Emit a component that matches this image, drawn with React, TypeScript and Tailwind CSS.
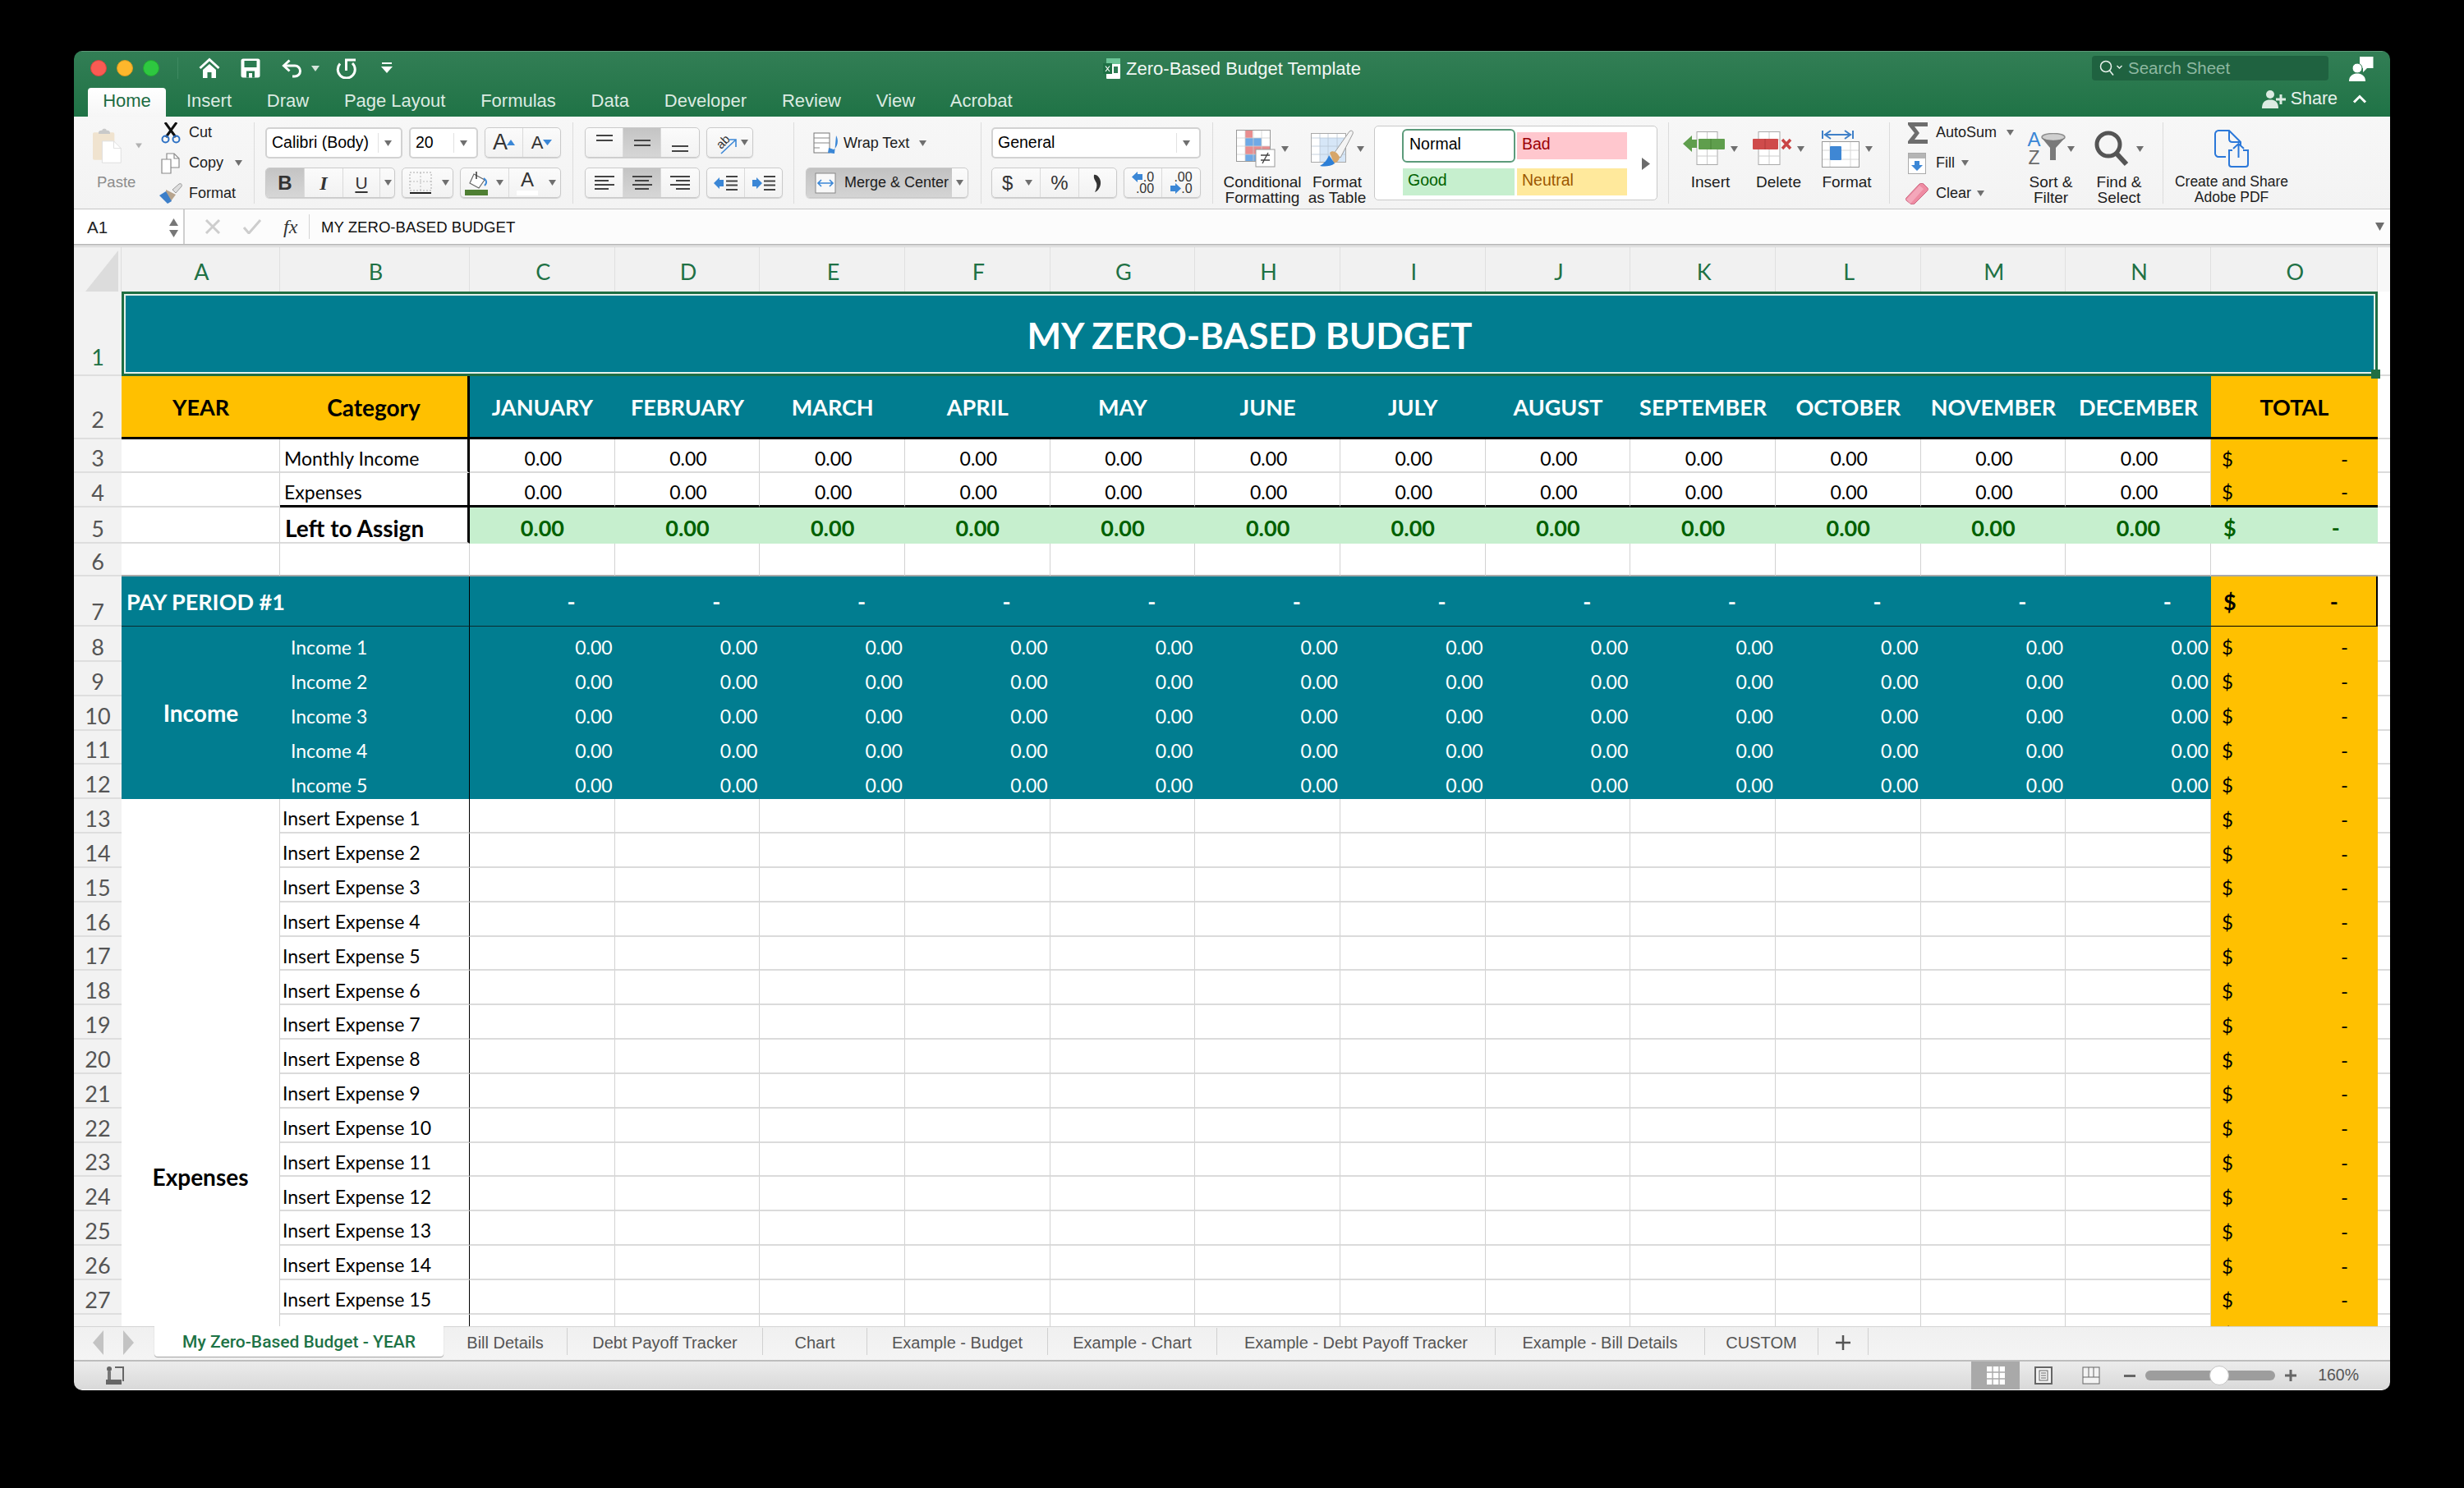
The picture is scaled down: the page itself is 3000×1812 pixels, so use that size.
import React from "react";

const teal = "bg-[#017d90]";
const months = ["JANUARY", "FEBRUARY", "MARCH", "APRIL", "MAY", "JUNE", "JULY", "AUGUST", "SEPTEMBER", "OCTOBER", "NOVEMBER", "DECEMBER"];
const columns = ["A", "B", "C", "D", "E", "F", "G", "H", "I", "J", "K", "L", "M", "N", "O"];
const ribbonTabs = ["Insert", "Draw", "Page Layout", "Formulas", "Data", "Developer", "Review", "View", "Acrobat"];
const sheetTabs = [
  { name: "Bill Details", w: "w-[151px]" },
  { name: "Debt Payoff Tracker", w: "w-[238px]" },
  { name: "Chart", w: "w-[127px]" },
  { name: "Example - Budget", w: "w-[220px]" },
  { name: "Example - Chart", w: "w-[206px]" },
  { name: "Example - Debt Payoff Tracker", w: "w-[339px]" },
  { name: "Example - Bill Details", w: "w-[255px]" },
  { name: "CUSTOM", w: "w-[138px]" },
];
const twelve = Array.from({ length: 12 }, (_, i) => i);

function Caret({ className = "" }: { className?: string }) {
  return (
    <svg width="9" height="7" viewBox="0 0 9 7" className={className}>
      <path d="M0 0H9L4.5 7Z" fill="#6f6f6f" />
    </svg>
  );
}

function Sep() {
  return <div className="w-px h-[99px] mt-[7px] bg-[#dcdcdc] shrink-0" />;
}

// grouped buttons of the ribbon
function Group({ className = "", children }: { className?: string; children: React.ReactNode }) {
  return (
    <div className={`flex h-[37px] rounded-[5px] border border-[#cacaca] bg-gradient-to-b from-[#fbfbfb] to-[#f2f2f2] shadow-[0_1px_1px_rgba(0,0,0,0.15)] overflow-hidden ${className}`}>
      {children}
    </div>
  );
}

function Seg({ w, on, line, children }: { w: string; on?: boolean; line?: boolean; children?: React.ReactNode }) {
  return (
    <div className={`flex items-center justify-center h-full ${w} ${on ? "bg-gradient-to-b from-[#c4c4c4] to-[#d6d6d6]" : ""} ${line ? "border-r border-[#dadada]" : ""}`}>
      {children}
    </div>
  );
}

function InputBox({ w, text, inner }: { w: string; text: string; inner: string }) {
  return (
    <div className={`flex items-center h-[38px] rounded-[5px] border-2 border-[#d2d2d2] bg-white ${w}`}>
      <span className={`pl-[6px] text-[19.5px] text-black ${inner}`}>{text}</span>
      <div className="w-px h-[24px] bg-[#e2e2e2]" />
      <Caret className="ml-[7px]" />
    </div>
  );
}

function Lines({ rows }: { rows: [number, number, number][] }) {
  return (
    <svg width="26" height="22" viewBox="0 0 26 22">
      {rows.map(([x, y, w], i) => (
        <rect key={i} x={x} y={y} width={w} height="2" fill="#444" />
      ))}
    </svg>
  );
}

function BigButton({ w, icon, gap = "gap-[6px]", labels, noCaret, size = "text-[19px]" }: { w: string; icon: React.ReactNode; gap?: string; labels: string[]; noCaret?: boolean; size?: string }) {
  return (
    <div className={`flex flex-col items-center pt-[14px] ${w}`}>
      <div className={`flex items-center justify-center h-[56px] pb-[6px] ${gap}`}>
        {icon}
        {!noCaret && <Caret />}
      </div>
      {labels.map((l) => (
        <div key={l} className={`${size} leading-[19px] text-[#1c1c1c] whitespace-nowrap`}>{l}</div>
      ))}
    </div>
  );
}

function SmallRow({ icon, label, caret, gap = "ml-[8px]" }: { icon: React.ReactNode; label: string; caret?: boolean; gap?: string }) {
  return (
    <div className="flex items-center h-[37px]">
      <div className="flex items-center w-[34px]">{icon}</div>
      <span className="text-[18px] text-[#1c1c1c]">{label}</span>
      {caret && <Caret className={gap} />}
    </div>
  );
}

function TitleBar() {
  return (
    <div className="grid grid-cols-[1fr_auto_1fr] h-[44px] pb-[4px] items-center">
      <div className="flex items-center pl-[20px]">
        <div className="w-[20px] h-[20px] rounded-full bg-[#fa5b53] border border-[#d8453e]" />
        <div className="w-[20px] h-[20px] rounded-full bg-[#fdb72c] border border-[#dc9a1e] ml-[12px]" />
        <div className="w-[20px] h-[20px] rounded-full bg-[#2ec840] border border-[#22a82f] ml-[12px]" />
        <div className="w-px h-[26px] bg-[#3f8a62] ml-[22px]" />
        <svg width="26" height="26" viewBox="0 0 26 26" className="ml-[25px]">
          <path d="M1.5 13 L13 2.5 L24.5 13" fill="none" stroke="#fff" strokeWidth="3" />
          <path d="M5 15 L13 8 L21 15 V25 H15.5 V18 H10.5 V25 H5Z" fill="#fff" />
        </svg>
        <svg width="24" height="24" viewBox="0 0 24 24" className="ml-[25px]">
          <rect x="0.5" y="0.5" width="23" height="23" rx="2.5" fill="#fff" />
          <rect x="4.5" y="3" width="15" height="8" fill="#2a7a50" />
          <rect x="7" y="15.5" width="10" height="8" fill="#2a7a50" />
          <rect x="10" y="18" width="4" height="5.5" fill="#fff" />
        </svg>
        <svg width="26" height="23" viewBox="0 0 26 23" className="ml-[26px]">
          <path d="M9.5 1.5 L2.5 8 L9.5 14.5" fill="none" stroke="#fff" strokeWidth="3" />
          <path d="M3 8 H16 A6.5 6.5 0 0 1 16 21 H13" fill="none" stroke="#fff" strokeWidth="3" />
        </svg>
        <svg width="10" height="7" viewBox="0 0 10 7" className="ml-[10px]">
          <path d="M0 0H10L5 7Z" fill="#d5e4db" />
        </svg>
        <svg width="25" height="25" viewBox="0 0 25 25" className="ml-[20px]">
          <path d="M5 6.5 A10.5 10.5 0 1 0 20 6" fill="none" stroke="#fff" strokeWidth="3" />
          <path d="M12.5 15 V2 H24" fill="none" stroke="#fff" strokeWidth="3" />
        </svg>
        <svg width="14" height="14" viewBox="0 0 14 14" className="ml-[30px]">
          <rect x="1" y="0" width="12" height="2" fill="#fff" />
          <path d="M0 5H14L7 13Z" fill="#fff" />
        </svg>
      </div>
      <div className="flex items-center">
        <svg width="21" height="25" viewBox="0 0 21 25">
          <rect x="4" y="0" width="17" height="25" rx="1" fill="#fff" />
          <rect x="4" y="0" width="17" height="7" fill="#6cc497" />
          <rect x="0" y="6" width="11" height="13" fill="#1e7145" />
          <rect x="13" y="10" width="5" height="8" fill="#2d7d54" />
          <path d="M3 9.5 L8 16 M8 9.5 L3 16" stroke="#fff" strokeWidth="1.2" />
        </svg>
        <span className="ml-[7px] text-[22px] text-[#f1f7f3]">Zero-Based Budget Template</span>
      </div>
      <div className="flex items-center justify-end pr-[20px]">
        <div className="flex items-center w-[288px] h-[30px] rounded-[4px] bg-[#1f6240] pl-[9px]">
          <svg width="30" height="20" viewBox="0 0 30 20">
            <circle cx="8" cy="8" r="6.5" fill="none" stroke="#e8f1ec" strokeWidth="1.5" />
            <path d="M12.5 13 L17 18.5" stroke="#e8f1ec" strokeWidth="1.6" />
            <path d="M21.5 7 L24.5 10 L27.5 7" fill="none" stroke="#e8f1ec" strokeWidth="1.4" />
          </svg>
          <span className="ml-[5px] text-[20.5px] text-[#8eb8a1]">Search Sheet</span>
        </div>
        <svg width="30" height="31" viewBox="0 0 30 31" className="ml-[25px]">
          <path d="M13 1 H29.5 V15 H22 L17 20 V15 H13Z" fill="#fff" />
          <circle cx="10" cy="15" r="6" fill="#fff" stroke="#2a7a50" strokeWidth="1" />
          <path d="M0 31 C0 24 5 21.5 10 21.5 C15 21.5 20 24 20 31Z" fill="#fff" />
        </svg>
      </div>
    </div>
  );
}

function TabStrip() {
  return (
    <div className="flex h-[35px] pl-[17px] items-stretch">
      <div className="flex items-center justify-center w-[95px] pb-[4px] bg-gradient-to-b from-[#ffffff] to-[#f6f6f6] rounded-t-[4px] text-[22px] text-[#1d6c43]">Home</div>
      <div className="flex items-center gap-[42.75px] pl-[25px] pb-[4px] text-[22px] text-[#dcebe2]">
        {ribbonTabs.map((t) => (
          <span key={t}>{t}</span>
        ))}
      </div>
      <div className="flex items-center ml-auto pr-[28px] pb-[9px]">
        <svg width="29" height="23" viewBox="0 0 29 23">
          <circle cx="10" cy="6" r="5" fill="#dcebe2" />
          <path d="M0 23 C0 15 4 12.5 10 12.5 C16 12.5 20 15 20 23Z" fill="#dcebe2" />
          <path d="M17 12 H29 M23 6 V18" stroke="#dcebe2" strokeWidth="3" />
        </svg>
        <span className="ml-[6px] text-[21.5px] text-[#e8f2ec]">Share</span>
        <svg width="18" height="11" viewBox="0 0 18 11" className="ml-[18px]">
          <path d="M2 9.5 L9 2.5 L16 9.5" fill="none" stroke="#fff" strokeWidth="3" />
        </svg>
      </div>
    </div>
  );
}

function Clipboard() {
  return (
    <div className="flex w-[219px] pl-[23px] shrink-0">
      <div className="flex flex-col w-[60px] pt-[12px]">
        <div className="flex items-center h-[47px]">
          <svg width="40" height="48" viewBox="0 0 40 48">
            <rect x="0" y="5" width="30" height="38" rx="2" fill="#f0e3cf" />
            <path d="M8 5 C8 2 12 2 13 2 C13 -1 19 -1 19 2 C21 2 24 2 24 7 H8Z" fill="#c9c9c9" />
            <path d="M13 17 H29 L39 27 V47 H13Z" fill="#fff" stroke="#dcdcdc" />
            <path d="M29 17 V27 H39" fill="none" stroke="#dcdcdc" />
          </svg>
          <Caret className="ml-[17px] opacity-50" />
        </div>
        <div className="pt-[7px] pl-[5px] text-[18.5px] text-[#8c8c8c]">Paste</div>
      </div>
      <div className="flex flex-col pl-[23px] pt-px">
        <SmallRow
          label="Cut"
          icon={
            <svg width="24" height="26" viewBox="0 0 24 26">
              <path d="M5 0 L18 18 M19 0 L6 18" stroke="#111" strokeWidth="3" />
              <circle cx="5.5" cy="20.5" r="4" fill="none" stroke="#2f72c4" strokeWidth="2" />
              <circle cx="18.5" cy="20.5" r="4" fill="none" stroke="#2f72c4" strokeWidth="2" />
            </svg>
          }
        />
        <SmallRow
          label="Copy"
          caret
          gap="ml-[14px]"
          icon={
            <svg width="23" height="26" viewBox="0 0 23 26">
              <path d="M7 1 H16 L22 7 V18 H7Z" fill="#fff" stroke="#8a8a8a" strokeWidth="1.2" />
              <path d="M16 1 V7 H22" fill="none" stroke="#8a8a8a" strokeWidth="1.2" />
              <path d="M1 8 H12 V25 H1Z" fill="#fff" stroke="#8a8a8a" strokeWidth="1.2" />
            </svg>
          }
        />
        <SmallRow
          label="Format"
          icon={
            <svg width="28" height="25" viewBox="0 0 28 25" className="-ml-[2px]">
              <path d="M16 8 L24 1 C27 0 28 2 27 4 L20 12Z" fill="#dedede" stroke="#9a9a9a" />
              <path d="M8 8 L20 14 L14 22 L8 16Z" fill="#b7a48d" />
              <path d="M0 15 L8 10 L15 22 L10 25Z" fill="#3d7fc9" />
            </svg>
          }
        />
      </div>
    </div>
  );
}

function FontGroup() {
  return (
    <div className="flex flex-col gap-[11px] w-[387px] pl-[13px] pt-[13px] shrink-0">
      <div className="flex gap-[8px]">
        <InputBox w="w-[167px]" text="Calibri (Body)" inner="w-[135px]" />
        <InputBox w="w-[84px]" text="20" inner="w-[52px]" />
        <Group className="w-[93px]">
          <Seg w="w-[47px]" line>
            <span className="text-[27px] text-[#333] -mr-[1px]">A</span>
            <svg width="10" height="7" viewBox="0 0 10 7"><path d="M5 0L10 7H0Z" fill="#3b87d6" /></svg>
          </Seg>
          <Seg w="w-[46px]">
            <span className="text-[22px] text-[#333]">A</span>
            <svg width="11" height="7" viewBox="0 0 11 7"><path d="M0 0H11L5.5 7Z" fill="#3b87d6" /></svg>
          </Seg>
        </Group>
      </div>
      <div className="flex gap-[8px]">
        <Group className="w-[158px]">
          <Seg w="w-[47px]" on line><span className="text-[24px] font-bold text-[#333]">B</span></Seg>
          <Seg w="w-[47px]" line><span className="text-[24px] italic text-[#333] font-['Liberation_Serif',serif] font-bold">I</span></Seg>
          <Seg w="w-[44px]"><span className="text-[21px] underline underline-offset-[3px] text-[#333]">U</span></Seg>
          <div className="flex items-center h-full border-l border-[#dadada] pl-[5px]"><Caret /></div>
        </Group>
        <Group className="w-[63px] items-center">
          <svg width="28" height="28" viewBox="0 0 28 28" className="ml-[8px]">
            <rect x="1" y="1" width="26" height="22" fill="none" stroke="#aaa" strokeDasharray="2 2" />
            <path d="M14 1V23 M1 12H27" stroke="#bbb" strokeDasharray="2 2" />
            <rect x="1" y="25" width="26" height="2" fill="#222" />
          </svg>
          <Caret className="ml-[12px]" />
        </Group>
        <Group className="w-[123px] items-center">
          <svg width="30" height="32" viewBox="0 0 30 32" className="ml-[4px]">
            <path d="M12 5 L25 12 L18 22 L7 16Z" fill="#fff" stroke="#666" strokeWidth="1.2" />
            <path d="M15 2 V11" stroke="#333" strokeWidth="1.5" />
            <path d="M24 10 C28 13 28 16 25 19" fill="none" stroke="#3b87d6" strokeWidth="2" />
            <rect x="1" y="24" width="28" height="7" fill="#4f7f33" />
          </svg>
          <Caret className="ml-[9px]" />
          <div className="w-px h-full bg-[#dadada] ml-[6px]" />
          <div className="flex flex-col items-center w-[44px]">
            <span className="text-[24px] leading-[24px] text-[#333]">A</span>
            <div className="w-[26px] h-[6px] bg-white mt-[1px]" />
          </div>
          <Caret className="ml-[4px]" />
        </Group>
      </div>
    </div>
  );
}

function AlignGroup() {
  return (
    <div className="flex flex-col gap-[11px] w-[268px] pl-[14px] pt-[13px] shrink-0">
      <div className="flex gap-[8px] h-[38px]">
        <Group className="w-[140px]">
          <Seg w="w-[47px]" line><Lines rows={[[3, 1, 20], [3, 7, 20]]} /></Seg>
          <Seg w="w-[46px]" on line><Lines rows={[[3, 7, 20], [3, 13, 20]]} /></Seg>
          <Seg w="w-[47px]"><Lines rows={[[3, 14, 20], [3, 20, 20]]} /></Seg>
        </Group>
        <Group className="w-[57px] items-center">
          <svg width="32" height="30" viewBox="0 0 32 30" className="ml-[7px]">
            <text x="4" y="19" fontSize="15" fill="#333" fontFamily="Liberation Sans" transform="rotate(-45 12 14)">ab</text>
            <path d="M10 28 L27 12 M19 11 H28 V20" fill="none" stroke="#3b87d6" strokeWidth="1.6" />
          </svg>
          <Caret className="ml-[2px]" />
        </Group>
      </div>
      <div className="flex gap-[8px]">
        <Group className="w-[140px]">
          <Seg w="w-[47px]" line><Lines rows={[[1, 2, 24], [1, 7, 17], [1, 12, 24], [1, 17, 17]]} /></Seg>
          <Seg w="w-[46px]" on line><Lines rows={[[1, 2, 24], [4, 7, 17], [1, 12, 24], [4, 17, 17]]} /></Seg>
          <Seg w="w-[47px]"><Lines rows={[[1, 2, 24], [8, 7, 17], [1, 12, 24], [8, 17, 17]]} /></Seg>
        </Group>
        <Group className="w-[93px]">
          <Seg w="w-[47px]" line>
            <svg width="30" height="22" viewBox="0 0 30 22">
              <path d="M0 11 L7 4 V7 H12 V15 H7 V18Z" fill="#3b87d6" />
              <path d="M15 3H29 M15 8.5H29 M15 13.5H29 M15 19H29" stroke="#444" strokeWidth="2" />
            </svg>
          </Seg>
          <Seg w="w-[46px]">
            <svg width="30" height="22" viewBox="0 0 30 22">
              <path d="M13 11 L6 4 V7 H1 V15 H6 V18Z" fill="#3b87d6" />
              <path d="M15 3H29 M15 8.5H29 M15 13.5H29 M15 19H29" stroke="#444" strokeWidth="2" />
            </svg>
          </Seg>
        </Group>
      </div>
    </div>
  );
}

function MergeGroup() {
  return (
    <div className="flex flex-col gap-[11px] w-[227px] pl-[14px] pt-[13px] shrink-0">
      <div className="flex items-center h-[38px] pl-[9px]">
        <svg width="32" height="28" viewBox="0 0 32 28">
          <rect x="1" y="2" width="19" height="24" fill="#fff" stroke="#777" />
          <path d="M1 8H20 M1 14H20 M1 20H8" stroke="#888" />
          <path d="M28 5 C32 12 29 20 25 22 L19 20 L18 26 L26 27" fill="#3b87d6" />
        </svg>
        <span className="ml-[5px] text-[18px] text-[#1c1c1c]">Wrap Text</span>
        <Caret className="ml-[12px]" />
      </div>
      <Group className="w-[198px] border-[#b5b5b5]">
        <div className="flex items-center w-[179px] h-full bg-gradient-to-b from-[#c2c2c2] to-[#d4d4d4] pl-[10px]">
          <svg width="26" height="26" viewBox="0 0 26 26">
            <rect x="1" y="1" width="24" height="24" fill="#f8f8f8" stroke="#888" />
            <path d="M4 13H22 M8 9L4 13L8 17 M18 9L22 13L18 17" fill="none" stroke="#3b87d6" strokeWidth="1.6" />
          </svg>
          <span className="ml-[10px] text-[18px] whitespace-nowrap text-[#1c1c1c]">Merge &amp; Center</span>
        </div>
        <div className="flex items-center justify-center w-[19px]"><Caret /></div>
      </Group>
    </div>
  );
}

function NumberGroup() {
  return (
    <div className="flex flex-col gap-[11px] w-[281px] pl-[12px] pt-[13px] shrink-0">
      <InputBox w="w-[255px]" text="General" inner="w-[223px]" />
      <div className="flex gap-[8px]">
        <Group className="w-[153px]">
          <Seg w="w-[60px]" line>
            <div className="flex items-center w-full pl-[12px]">
              <span className="text-[24px] text-[#333]">$</span>
              <Caret className="ml-[15px]" />
            </div>
          </Seg>
          <Seg w="w-[47px]" line><span className="text-[24px] text-[#333]">%</span></Seg>
          <Seg w="w-[46px]">
            <svg width="12" height="24" viewBox="0 0 12 24"><path d="M2 2 C5 1 11 6 10 13 C9.5 18 6 22 3 23 C5 19 6 15 5 12 C4 9 1 7 2 2Z" fill="#333" /></svg>
          </Seg>
        </Group>
        <Group className="w-[94px]">
          <Seg w="w-[47px]" line>
            <div className="flex flex-col items-end leading-[14px]">
              <div className="flex items-center">
                <svg width="14" height="13" viewBox="0 0 14 13"><path d="M0 6.5 L7 0 V3 H13 V10 H7 V13Z" fill="#3b87d6" /></svg>
                <span className="text-[16px] text-[#333]">.0</span>
              </div>
              <span className="text-[16px] text-[#333]">.00</span>
            </div>
          </Seg>
          <Seg w="w-[47px]">
            <div className="flex flex-col items-end leading-[14px]">
              <span className="text-[16px] text-[#333]">.00</span>
              <div className="flex items-center">
                <svg width="14" height="13" viewBox="0 0 14 13"><path d="M14 6.5 L7 0 V3 H1 V10 H7 V13Z" fill="#3b87d6" /></svg>
                <span className="text-[16px] text-[#333]">.0</span>
              </div>
            </div>
          </Seg>
        </Group>
      </div>
    </div>
  );
}

function StyleCell({ bg, text, children }: { bg: string; text: string; children: string }) {
  return <div className={`flex items-center h-[33px] pl-[6px] pb-[3px] text-[19.5px] ${bg} ${text}`}>{children}</div>;
}

function StylesGroup() {
  return (
    <div className="flex w-[554px] pl-[13px] shrink-0">
      <BigButton
        w="w-[94px]"
        gap="gap-[7px]"
        labels={["Conditional", "Formatting"]}
        icon={
          <svg width="48" height="46" viewBox="0 0 48 46">
            <rect x="0.5" y="0.5" width="41" height="38" fill="#fff" stroke="#999" />
            <rect x="11" y="1" width="9" height="9" fill="#e88d8f" />
            <rect x="11" y="10" width="20" height="10" fill="#6fa9e5" />
            <rect x="11" y="20" width="30" height="10" fill="#e88d8f" />
            <rect x="11" y="30" width="16" height="8" fill="#6fa9e5" />
            <path d="M11 1V38 M21 1V38 M31 1V38 M1 10H41 M1 20H41 M1 30H41" stroke="#cfcfcf" strokeWidth="0.8" />
            <rect x="24" y="24" width="23" height="21" fill="#fff" stroke="#999" />
            <path d="M30 31H41 M30 37H41 M39 28L32 41" stroke="#444" strokeWidth="1.4" />
          </svg>
        }
      />
      <BigButton
        w="w-[88px]"
        gap="gap-[4px]"
        labels={["Format", "as Table"]}
        icon={
          <svg width="52" height="46" viewBox="0 0 52 46">
            <rect x="0.5" y="4.5" width="42" height="35" fill="#fff" stroke="#a9a9a9" />
            <rect x="11" y="10" width="31" height="29" fill="#d6e6f7" />
            <path d="M11 5V39 M21 5V39 M32 5V39 M1 10H42 M1 20H42 M1 30H42" stroke="#b9c7d6" strokeWidth="0.8" />
            <path d="M28 29 L47 2 C50 0 52 2 51 5 L36 34Z" fill="#f4f4f4" stroke="#9b9b9b" />
            <path d="M23 28 C26 24 33 27 35 34 C34 38 31 40 28 41Z" fill="#d7a66a" />
            <path d="M22 31 L29 41 C24 45 16 45 11 44 C15 42 20 37 22 31Z" fill="#2d7fd6" />
          </svg>
        }
      />
      <div className="flex items-start w-[345px] h-[91px] mt-[11px] ml-px rounded-[5px] border border-[#c9c9c9] bg-white">
        <div className="grid grid-cols-[136px_134px] gap-x-[3px] gap-y-[11px] pl-[34px] pt-[7px]">
          <div className="flex items-center h-[41px] -my-[4px] -mx-[1px] pl-[7px] pb-[3px] rounded-[6px] border-2 border-[#5c9b7b] bg-white text-[19.5px] text-black">Normal</div>
          <StyleCell bg="bg-[#ffc7ce]" text="text-[#9c0006]">Bad</StyleCell>
          <StyleCell bg="bg-[#c6efce]" text="text-[#006100]">Good</StyleCell>
          <StyleCell bg="bg-[#ffe99c]" text="text-[#9c5700]">Neutral</StyleCell>
        </div>
        <svg width="10" height="15" viewBox="0 0 10 15" className="ml-[18px] mt-[38px]">
          <path d="M0 0L10 7.5L0 15Z" fill="#6b6b6b" />
        </svg>
      </div>
    </div>
  );
}

function CellsGroup() {
  return (
    <div className="flex w-[268px] pl-[9px] shrink-0">
      <BigButton
        w="w-[83px]"
        labels={["Insert"]}
        icon={
          <svg width="52" height="42" viewBox="0 0 52 42">
            <rect x="17" y="0.5" width="25" height="40" fill="#fff" stroke="#aaa" />
            <path d="M29.5 1V40 M17 10H42 M17 30H42" stroke="#ccc" />
            <rect x="19" y="9" width="32" height="13" rx="1" fill="#5f9e4d" />
            <path d="M34 9V22" stroke="#4a8438" />
            <path d="M0 15 L11 5 V10 H17 V20 H11 V25Z" fill="#5f9e4d" />
          </svg>
        }
      />
      <BigButton
        w="w-[83px]"
        labels={["Delete"]}
        icon={
          <svg width="48" height="42" viewBox="0 0 48 42">
            <rect x="7" y="0.5" width="26" height="40" fill="#fff" stroke="#aaa" />
            <path d="M20 1V40 M7 10H33 M7 30H33" stroke="#ccc" />
            <rect x="0" y="9" width="31" height="13" rx="1" fill="#cf4b4b" />
            <path d="M15 9V22" stroke="#b03a3a" />
            <path d="M36 10L46 21 M46 10L36 21" stroke="#c94545" strokeWidth="3.5" />
          </svg>
        }
      />
      <BigButton
        w="w-[83px]"
        labels={["Format"]}
        icon={
          <svg width="47" height="47" viewBox="0 0 47 47">
            <path d="M1 1V11 M38 1V11 M3 6H36 M11 1L4 6L11 11 M28 1L35 6L28 11" fill="none" stroke="#3f80c8" strokeWidth="2" />
            <rect x="0.5" y="14.5" width="45" height="31" fill="#fff" stroke="#999" />
            <path d="M10 15V45 M35 15V45 M1 25H45 M1 36H45" stroke="#d6d6d6" />
            <rect x="10" y="20" width="14" height="17" rx="1" fill="#3f87d4" />
          </svg>
        }
      />
    </div>
  );
}

function EditingGroup() {
  return (
    <div className="flex w-[332px] pl-[22px] shrink-0">
      <div className="flex flex-col w-[129px] pt-px">
        <SmallRow
          label="AutoSum"
          caret
          gap="ml-[12px]"
          icon={
            <svg width="24" height="26" viewBox="0 0 24 26"><path d="M0 0H24V5H8L14 13L8 21H24V26H0V23L8 13L0 3Z" fill="#6d6d6d" /></svg>
          }
        />
        <SmallRow
          label="Fill"
          caret
          gap="ml-[8px]"
          icon={
            <svg width="22" height="26" viewBox="0 0 22 26">
              <rect x="0.5" y="0.5" width="21" height="25" fill="#fff" stroke="#aaa" />
              <rect x="1" y="1" width="20" height="6" fill="#b5b5b5" />
              <path d="M11 22 L4 15 H8 V10 H14 V15 H18Z" fill="#3b87d6" />
            </svg>
          }
        />
        <SmallRow
          label="Clear"
          caret
          gap="ml-[7px]"
          icon={
            <svg width="28" height="26" viewBox="0 0 28 26" className="-ml-[3px]">
              <path d="M1 18 L17 1 C19 0 22 0 23 2 L27 6 C28 8 27 9 26 10 L11 25 C9 26 7 26 6 25 L1 21 C0 20 0 19 1 18Z" fill="#ee8ba2" stroke="#c9647f" />
              <path d="M6 25 L1 20 L17 3 L22 7Z" fill="#f4a7ba" />
            </svg>
          }
        />
      </div>
      <BigButton
        w="w-[90px]"
        gap="gap-[2px]"
        labels={["Sort &", "Filter"]}
        icon={
          <div className="flex items-center">
            <div className="flex flex-col items-center">
              <span className="text-[24px] leading-[23px] text-[#3b87d6]">A</span>
              <span className="text-[23px] leading-[23px] text-[#6a6a6a]">Z</span>
            </div>
            <svg width="30" height="34" viewBox="0 0 30 34" className="mb-[4px]">
              <ellipse cx="15" cy="5" rx="14" ry="4.5" fill="#cfcfcf" stroke="#8f8f8f" strokeWidth="1.5" />
              <path d="M1 6 L11 18 V33 H18 V18 L29 6 C22 10 8 10 1 6Z" fill="#7a7a7a" />
            </svg>
          </div>
        }
      />
      <BigButton
        w="w-[76px]"
        gap="gap-[9px]"
        labels={["Find &", "Select"]}
        icon={
          <svg width="42" height="44" viewBox="0 0 42 44">
            <circle cx="17" cy="17" r="14" fill="none" stroke="#555" strokeWidth="5" />
            <path d="M27 28 L39 41" stroke="#555" strokeWidth="6" />
          </svg>
        }
      />
    </div>
  );
}

function Ribbon() {
  return (
    <div className="flex h-[113px] bg-gradient-to-b from-[#f7f7f7] to-[#f3f3f3] border-b border-[#c6c6c6]">
      <Clipboard />
      <Sep />
      <FontGroup />
      <Sep />
      <AlignGroup />
      <Sep />
      <MergeGroup />
      <Sep />
      <NumberGroup />
      <Sep />
      <StylesGroup />
      <Sep />
      <CellsGroup />
      <Sep />
      <EditingGroup />
      <Sep />
      <BigButton
        w="w-[166px]"
        noCaret
        size="text-[17.5px]"
        labels={["Create and Share", "Adobe PDF"]}
        icon={
          <svg width="42" height="46" viewBox="0 0 42 46">
            <path d="M14 33 H5 C3 33 1 31 1 29 V5 C1 3 3 1 5 1 H18 L32 15 V20 M18 1 V11 C18 13 19 15 22 15 H32" fill="none" stroke="#2b78d9" strokeWidth="2" />
            <path d="M22 25 H18 V42 C18 44 19 45 21 45 H38 C40 45 41 44 41 42 V25 H35 M29.5 34 V17 M23 23 L29.5 17 L36 23" fill="none" stroke="#2b78d9" strokeWidth="2" />
          </svg>
        }
      />
    </div>
  );
}

function FormulaBar() {
  return (
    <>
      <div className="flex h-[42px] items-center bg-[#fcfcfc]">
        <div className="flex items-center w-[135px] h-full bg-white border-r-2 border-[#cfcfcf] pl-[16px] pt-[2px]">
          <span className="text-[20.5px] text-[#222] w-[100px]">A1</span>
          <div className="flex flex-col gap-[5px]">
            <svg width="11" height="9" viewBox="0 0 11 9"><path d="M5.5 0L11 9H0Z" fill="#777" /></svg>
            <svg width="11" height="9" viewBox="0 0 11 9"><path d="M0 0H11L5.5 9Z" fill="#777" /></svg>
          </div>
        </div>
        <svg width="20" height="18" viewBox="0 0 20 18" className="ml-[24px]">
          <path d="M2 1L18 17 M18 1L2 17" stroke="#cdcdcd" strokeWidth="3" />
        </svg>
        <svg width="24" height="18" viewBox="0 0 24 18" className="ml-[26px]">
          <path d="M2 10L8 17L22 1" fill="none" stroke="#cdcdcd" strokeWidth="3" />
        </svg>
        <span className="ml-[26px] w-[31px] text-[24px] italic text-[#333] font-['Liberation_Serif',serif]">fx</span>
        <div className="w-px h-[30px] bg-[#d4d4d4]" />
        <span className="ml-[14px] pt-[2px] text-[18.6px] text-[#111]">MY ZERO-BASED BUDGET</span>
        <svg width="11" height="10" viewBox="0 0 11 10" className="ml-auto mr-[7px]">
          <path d="M0 0H11L5.5 10Z" fill="#6d6d6d" />
        </svg>
      </div>
      <div className="h-[4px] border-t-2 border-b border-t-[#bfbfbf] border-b-[#d2d2d2] bg-[#f4f4f4]" />
    </>
  );
}

const grid = "border-r border-b-2 border-r-[#d2d2d2] border-b-[#dbdbdb]";
const bodyCell = "flex items-center pt-[7px]";

function RowHead({ n, cls = "pb-0", green }: { n: number; cls?: string; green?: boolean }) {
  return (
    <div className={`flex items-end justify-center bg-[#f2f2f2] border-b-2 border-b-[#dedede] text-[27px] leading-[32px] ${green ? "text-[#1f7145]" : "text-[#555]"} ${cls}`}>
      {n}
    </div>
  );
}

// the right hand sliver behind column O
function Pad({ cls = "" }: { cls?: string }) {
  return <div className={`bg-white border-b-2 border-b-[#dbdbdb] ${cls}`} />;
}

function Total({ cls = "", bold, green }: { cls?: string; bold?: boolean; green?: boolean }) {
  const color = green ? "text-[#006100]" : "text-black";
  return (
    <div className={`flex items-center justify-between pt-[7px] ${bold ? "pl-[15px] pr-[46px] text-[27px] font-bold" : "pl-[13px] pr-[36px] text-[24px]"} ${color} ${green ? "bg-[#c6efce]" : "bg-[#ffc000]"} ${cls}`}>
      <span>$</span>
      <span>-</span>
    </div>
  );
}

function Sheet() {
  const expenses = Array.from({ length: 16 }, (_, i) => i + 1);
  return (
    <div className="h-[1314px] overflow-hidden bg-white font-['Lato',sans-serif]">
      <div className="grid grid-cols-[58px_193px_231px_repeat(12,176.67px)_203px_15px] grid-rows-[54px_103px_77px_41px_42px_44px_40px_61px_43px_repeat(26,41.84px)]">
        {/* column letters */}
        <div className="flex items-end justify-end bg-[#f1f1f1] pr-[3px] border-r border-[#dedede]">
          <svg width="40" height="50" viewBox="0 0 40 50">
            <path d="M40 0V50H0Z" fill="#dcdcdc" />
          </svg>
        </div>
        {columns.map((c) => (
          <div key={c} className="flex items-center justify-center pt-[6px] pl-[3px] bg-[#f1f1f1] border-r border-[#e0e0e0] text-[27px] text-[#1f7145]">
            {c}
          </div>
        ))}
        <div className="bg-[#f8f8f8]" />

        {/* row 1, the selected title */}
        <RowHead n={1} green cls="pb-[5px]" />
        <div className={`relative col-span-15 flex items-center justify-center ${teal} border-[3px] border-[#1f6e43] outline-2 outline-offset-[-5px] outline-[#e6f1ec] text-[44px] font-bold text-white pt-[3px]`}>
          MY ZERO-BASED BUDGET
          <div className="absolute -right-[6px] -bottom-[6px] z-10 w-[11px] h-[11px] bg-[#1f6e43]" />
        </div>
        <Pad />

        {/* row 2 */}
        <RowHead n={2} cls="pb-[6px]" />
        <div className="flex items-center justify-center pt-[2px] bg-[#ffc000] border-b-[3px] border-black text-[27px] font-bold text-black">YEAR</div>
        <div className="flex items-center justify-center pt-[2px] bg-[#ffc000] border-b-[3px] border-r-[3px] border-black text-[28px] font-bold text-black">Category</div>
        {months.map((m) => (
          <div key={m} className={`flex items-center justify-center pt-[2px] ${teal} border-b-[3px] border-black text-[27px] font-bold text-white whitespace-nowrap`}>{m}</div>
        ))}
        <div className="flex items-center justify-center pt-[2px] bg-[#ffc000] border-b-[3px] border-black text-[27px] font-bold text-black">TOTAL</div>
        <Pad />

        {/* rows 3 and 4 */}
        <RowHead n={3} />
        <div className={grid} />
        <div className={`${bodyCell} pl-[5px] border-r-[3px] border-r-black border-b-2 border-b-[#dbdbdb] text-[23px] text-black`}>Monthly Income</div>
        {twelve.map((i) => (
          <div key={i} className={`${bodyCell} justify-center pl-[3px] ${grid} text-[23px] text-black`}>0.00</div>
        ))}
        <Total />
        <Pad />
        <RowHead n={4} />
        <div className={grid} />
        <div className={`${bodyCell} pl-[5px] border-r-[3px] border-r-black border-b-[3px] border-b-black text-[23px] text-black`}>Expenses</div>
        {twelve.map((i) => (
          <div key={i} className={`${bodyCell} justify-center pl-[3px] border-r border-r-[#d2d2d2] border-b-[3px] border-b-black text-[23px] text-black`}>0.00</div>
        ))}
        <Total cls="border-b-[3px] border-b-black" />
        <Pad />

        {/* row 5 */}
        <RowHead n={5} />
        <div className={grid} />
        <div className={`${bodyCell} pl-[6px] border-r-[3px] border-r-black border-b-2 border-b-[#dbdbdb] text-[28px] font-bold text-black`}>Left to Assign</div>
        {twelve.map((i) => (
          <div key={i} className={`${bodyCell} justify-center bg-[#c6efce] text-[27px] font-bold text-[#006100]`}>0.00</div>
        ))}
        <Total bold green />
        <Pad />

        {/* row 6 */}
        <RowHead n={6} cls="pb-0 border-b-[#a9a9a9]" />
        <div className="border-r border-r-[#d2d2d2] border-b-2 border-b-[#a9a9a9]" />
        <div className="border-r border-r-[#d2d2d2] border-b-2 border-b-[#a9a9a9]" />
        {twelve.map((i) => (
          <div key={i} className="border-r border-r-[#d2d2d2] border-b-2 border-b-[#a9a9a9]" />
        ))}
        <div className="border-b-2 border-b-[#a9a9a9]" />
        <Pad cls="border-b-[#a9a9a9]" />

        {/* row 7 */}
        <RowHead n={7} />
        <div className={`col-span-2 flex items-center pt-[3px] pl-[6px] ${teal} border-r border-r-black border-b border-b-[#0b2b30] text-[27px] font-bold text-white`}>PAY PERIOD #1</div>
        {twelve.map((i) => (
          <div key={i} className={`flex items-center justify-end pt-[3px] pr-[48px] ${teal} border-b border-b-[#0b2b30] text-[27px] font-bold text-white`}>-</div>
        ))}
        <Total bold cls="border-b border-b-black border-r-2 border-r-black !pt-[2px]" />
        <Pad />

        {/* rows 8-12 */}
        {[1, 2, 3, 4, 5].map((n) => (
          <React.Fragment key={n}>
            <RowHead n={n + 7} />
            {n === 1 && (
              <div className={`row-span-5 flex items-center justify-center ${teal} text-[28px] font-bold text-white`}>Income</div>
            )}
            <div className={`${bodyCell} pl-[13px] ${teal} border-r border-r-black text-[23px] text-white`}>Income {n}</div>
            {twelve.map((i) => (
              <div key={i} className={`${bodyCell} justify-end pr-[3px] ${teal} text-[23px] text-white`}>0.00</div>
            ))}
            <Total />
            <Pad />
          </React.Fragment>
        ))}

        {/* rows 13 and down */}
        {expenses.map((n) => (
          <React.Fragment key={n}>
            <RowHead n={n + 12} />
            {n === 1 && (
              <div className="row-span-22 flex items-center justify-center border-r border-r-[#d2d2d2] text-[28px] font-bold text-black">Expenses</div>
            )}
            <div className={`${bodyCell} pl-[3px] border-r border-r-black border-b-2 border-b-[#dbdbdb] text-[23px] text-black`}>Insert Expense {n}</div>
            {twelve.map((i) => (
              <div key={i} className={grid} />
            ))}
            <Total />
            <Pad />
          </React.Fragment>
        ))}
      </div>
    </div>
  );
}

function TabBar() {
  return (
    <div className="flex h-[41px] bg-gradient-to-b from-[#f0f0f0] to-[#f4f4f4] border-t border-[#d4d4d4] text-[20px] text-[#555]">
      <div className="flex items-center w-[98px] pl-[23px] pb-[3px] shrink-0">
        <svg width="14" height="30" viewBox="0 0 14 30"><path d="M13 0V30L0 15Z" fill="#c3c3c3" /></svg>
        <svg width="14" height="30" viewBox="0 0 14 30" className="ml-[22px]"><path d="M1 0V30L14 15Z" fill="#c3c3c3" /></svg>
      </div>
      <div className="flex items-center justify-center w-[352px] h-[37px] -mt-[1px] pt-[2px] bg-white rounded-b-[4px] shadow-[0_1px_1px_rgba(0,0,0,0.35)] font-['Roboto',sans-serif] font-medium text-[21px] text-[#1d7346]">
        My Zero-Based Budget - YEAR
      </div>
      {sheetTabs.map((t) => (
        <div key={t.name} className={`flex items-center justify-center h-[33px] mt-px pt-[3px] border-r border-[#d0d0d0] whitespace-nowrap ${t.w}`}>{t.name}</div>
      ))}
      <div className="flex items-center justify-center w-[61px] h-[33px] mt-px pt-[2px] border-r border-[#d0d0d0]">
        <svg width="18" height="18" viewBox="0 0 18 18"><path d="M9 0V18 M0 9H18" stroke="#555" strokeWidth="2.5" /></svg>
      </div>
    </div>
  );
}

function StatusBar() {
  return (
    <>
      <div className="h-[2px] bg-[#bdbdbd]" />
      <div className="flex items-center h-[35px] bg-gradient-to-b from-[#ececec] to-[#d9d9d9] border-b border-white">
        <svg width="26" height="22" viewBox="0 0 26 22" className="ml-[38px]">
          <circle cx="5" cy="3" r="3" fill="#666" />
          <rect x="3" y="6" width="4" height="10" fill="#777" />
          <rect x="1" y="16" width="19" height="6" fill="#666" />
          <path d="M12 1H22 V18" fill="none" stroke="#666" strokeWidth="2" />
        </svg>
        <div className="flex items-center justify-center w-[59px] h-full bg-[#a9a9a9] ml-auto">
          <svg width="22" height="22" viewBox="0 0 22 22">
            <rect width="22" height="22" fill="#fff" />
            <path d="M7 0V22 M15 0V22 M0 7H22 M0 15H22" stroke="#a9a9a9" strokeWidth="1.4" />
          </svg>
        </div>
        <svg width="22" height="22" viewBox="0 0 22 22" className="ml-[18px]">
          <rect x="1" y="1" width="20" height="20" fill="#f3f3f3" stroke="#666" strokeWidth="2" />
          <rect x="6" y="5" width="10" height="12" fill="none" stroke="#666" />
          <path d="M8 8H14 M8 11H14 M8 14H14" stroke="#666" />
        </svg>
        <svg width="22" height="22" viewBox="0 0 22 22" className="ml-[36px]">
          <rect x="1" y="1" width="20" height="20" fill="#f3f3f3" stroke="#666" />
          <path d="M1 13H21 M8 1V13 M14 1V13" stroke="#666" />
        </svg>
        <div className="w-[14px] h-[3px] bg-[#666] ml-[29px]" />
        <div className="relative w-[158px] h-[12px] rounded-full bg-[#9d9d9d] ml-[12px]">
          <div className="absolute left-[78px] -top-[6px] w-[24px] h-[24px] rounded-full bg-white border border-[#c5c5c5]" />
        </div>
        <svg width="16" height="16" viewBox="0 0 16 16" className="ml-[11px]">
          <path d="M8 1V15 M1 8H15" stroke="#666" strokeWidth="3" />
        </svg>
        <span className="ml-[25px] mr-[38px] text-[19.5px] text-[#555]">160%</span>
      </div>
    </>
  );
}

export default function App() {
  return (
    <div className="w-[3000px] h-[1812px] bg-black overflow-hidden font-['Liberation_Sans',Arial,sans-serif]">
      <div className="w-[2820px] h-[1631px] mt-[62px] ml-[90px] rounded-[10px] overflow-hidden translate-y-0 flex flex-col">
        <div className="bg-gradient-to-b from-[#327e55] to-[#1f7346] border-t border-[#5c9a79]">
          <TitleBar />
          <TabStrip />
        </div>
        <Ribbon />
        <FormulaBar />
        <Sheet />
        <TabBar />
        <StatusBar />
      </div>
    </div>
  );
}
